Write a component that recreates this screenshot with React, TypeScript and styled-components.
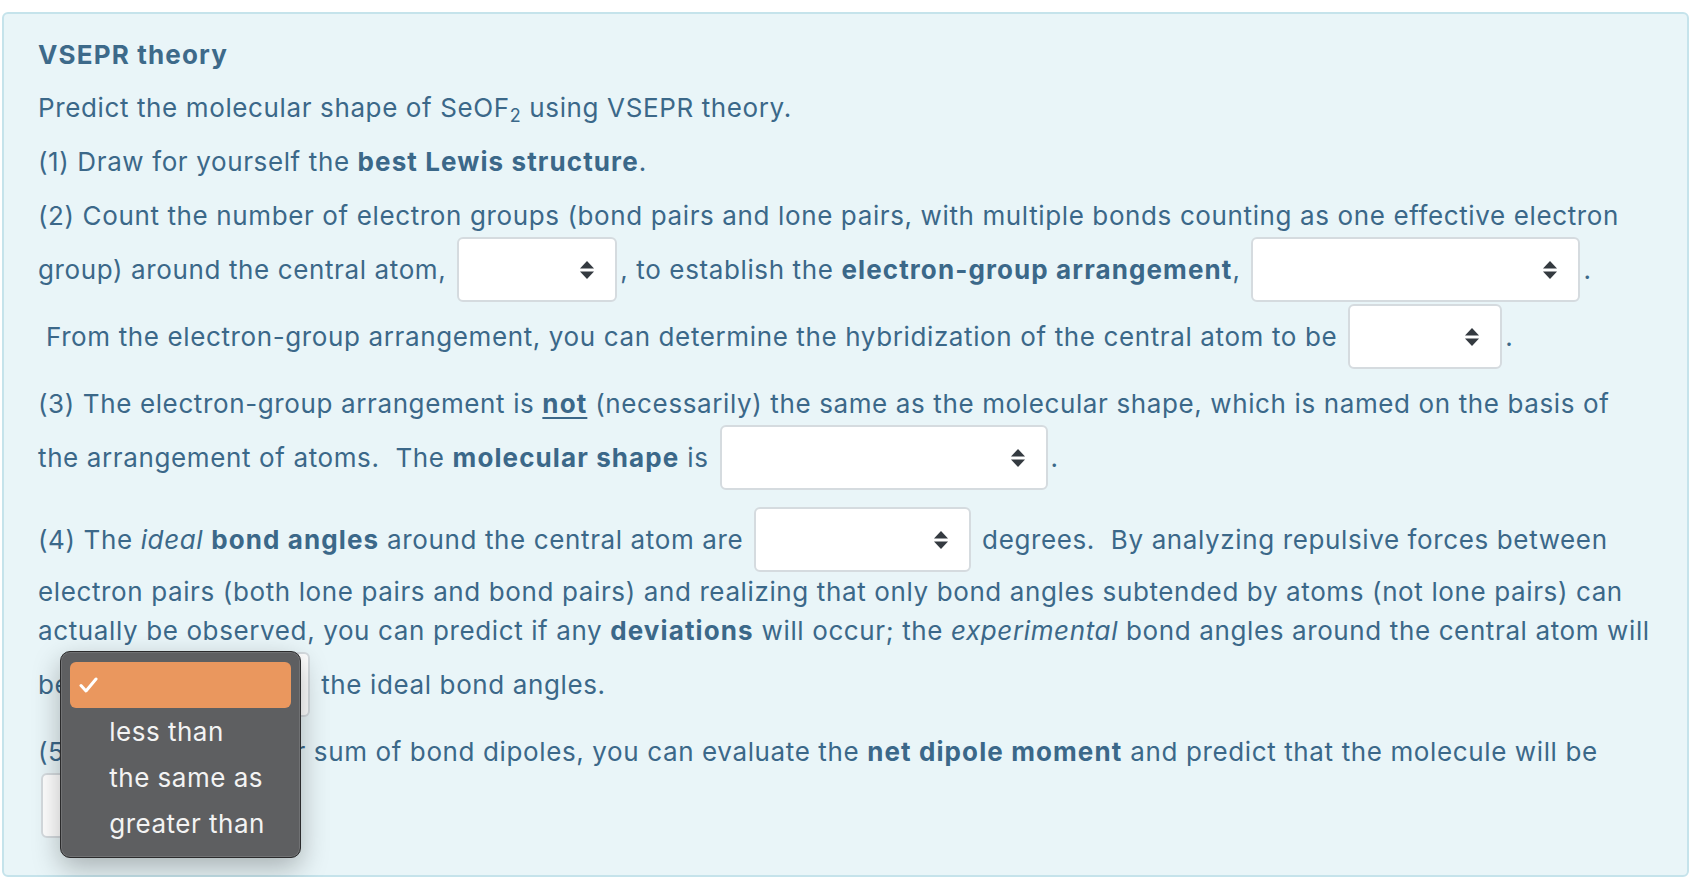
import styled, { createGlobalStyle } from "styled-components";

const GlobalStyle = createGlobalStyle`
  body {
    margin: 0;
    background: #ffffff;
    font-family: Inter, "Noto Sans", sans-serif;
  }
`;

const Panel = styled.div`
  box-sizing: border-box;
  height: 865px;
  margin: 12px 6px 0 2px;
  padding: 21px 20px 0 34px;
  background: #e9f5f8;
  border: 2px solid #c5e3eb;
  border-radius: 6px;
  color: #3b6889;
  font-size: 26px;
  line-height: 39px;
  letter-spacing: 0.62px;
  white-space: nowrap;
`;

const P = styled.p`
  margin: 0 0 15px;
`;

const Title = styled(P)`
  margin-bottom: 14px;
  font-weight: 700;
  letter-spacing: 1.15px;
  color: #3d6a8a;
`;

const B = styled.b`
  font-weight: 700;
  letter-spacing: 1.1px;
`;

const U = styled(B)`
  text-decoration: underline;
  text-underline-offset: 4px;
`;

const Sub = styled.sub`
  font-size: 18px;
  line-height: 0;
  vertical-align: -5px;
`;

const Anchor = styled.span`
  position: relative;
`;

const SelectWrap = styled.span<{ $w: number }>`
  position: relative;
  display: inline-block;
  overflow: hidden;
  vertical-align: -23px;
  width: ${({ $w }) => $w}px;
  height: 65px;
  margin: 2px 3px 0;
`;

const NativeSelect = styled.select`
  display: block;
  appearance: none;
  box-sizing: border-box;
  width: 100%;
  height: 100%;
  padding: 0 44px 0 12px;
  background: #ffffff;
  border: 2px solid #d5dbdf;
  border-radius: 6px;
  font: inherit;
  color: #333;
`;

const Arrow = styled.svg`
  position: absolute;
  right: 22px;
  top: 50%;
  margin-top: -10px;
  pointer-events: none;
`;

const Menu = styled.div`
  position: absolute;
  top: -18px;
  left: -18px;
  z-index: 10;
  box-sizing: border-box;
  width: 241px;
  padding: 10px 9px 11px;
  background: #5e5f61;
  border: 1px solid #2b2b2c;
  border-radius: 10px;
  box-shadow: inset 0 0 0 1px rgba(255, 255, 255, 0.12),
    0 10px 28px rgba(0, 0, 0, 0.28);
  letter-spacing: 0.5px;
`;

const Item = styled.div<{ $active?: boolean }>`
  display: flex;
  align-items: center;
  position: relative;
  height: 46px;
  padding: 2px 0 0 39px;
  box-sizing: border-box;
  border-radius: 6px;
  background: ${({ $active }) => ($active ? "#ea975e" : "transparent")};
  color: #f3f3f3;
  font-size: 26px;
  line-height: 44px;
`;

const Check = styled.svg`
  position: absolute;
  left: 9px;
  top: 15px;
`;

function Select({ w, options }: { w: number; options?: string[] }) {
  return (
    <Anchor>
      <SelectWrap $w={w}>
        <NativeSelect defaultValue="">
          <option value=""></option>
        </NativeSelect>
        <Arrow width="16" height="20" viewBox="0 0 16 20">
          <path d="M1 8.5 L8 1 L15 8.5 Z" fill="#343a40" />
          <path d="M1 11.5 L8 19 L15 11.5 Z" fill="#343a40" />
        </Arrow>
      </SelectWrap>
      {options && (
        <Menu>
          <Item $active>
            <Check width="19" height="16" viewBox="0 0 19 16">
              <path
                d="M2 8.5 L7 14 L17 2"
                fill="none"
                stroke="#ffffff"
                strokeWidth="3"
                strokeLinecap="round"
                strokeLinejoin="round"
              />
            </Check>
          </Item>
          {options.map((o) => (
            <Item key={o}>{o}</Item>
          ))}
        </Menu>
      )}
    </Anchor>
  );
}

export default function App() {
  return (
    <>
      <GlobalStyle />
      <Panel>
        <Title>VSEPR theory</Title>
        <P>
          Predict the molecular shape of SeOF<Sub>2</Sub> using VSEPR theory.
        </P>
        <P>
          (1) Draw for yourself the <B>best Lewis structure</B>.
        </P>
        <P>
          (2) Count the number of electron groups (bond pairs and lone pairs,
          with multiple bonds counting as one effective electron
          <br />
          group) around the central atom, <Select w={160} />, to establish the{" "}
          <B>electron-group arrangement</B>, <Select w={329} />.
          <br />
          {"\u00a0"}From the electron-group arrangement, you can determine the
          hybridization of the central atom to be <Select w={154} />.
        </P>
        <P>
          (3) The electron-group arrangement is <U>not</U> (necessarily) the
          same as the molecular shape, which is named on the basis of
          <br />
          the arrangement of atoms.{"\u00a0"} The <B>molecular shape</B> is{" "}
          <Select w={328} />.
        </P>
        <P>
          (4) The <i>ideal</i> <B>bond angles</B> around the central atom are{" "}
          <Select w={217} /> degrees.{"\u00a0"} By analyzing repulsive forces
          between
          <br />
          electron pairs (both lone pairs and bond pairs) and realizing that
          only bond angles subtended by atoms (not lone pairs) can
          <br />
          actually be observed, you can predict if any <B>deviations</B> will
          occur; the <i>experimental</i> bond angles around the central atom
          will
          <br />
          be{" "}
          <Select
            w={229}
            options={["less than", "the same as", "greater than"]}
          />{" "}
          the ideal bond angles.
        </P>
        <P>
          (5) Taking the vector sum of bond dipoles, you can evaluate the{" "}
          <B>net dipole moment</B> and predict that the molecule will be
          <br />
          <Select w={200} />.
        </P>
      </Panel>
    </>
  );
}
